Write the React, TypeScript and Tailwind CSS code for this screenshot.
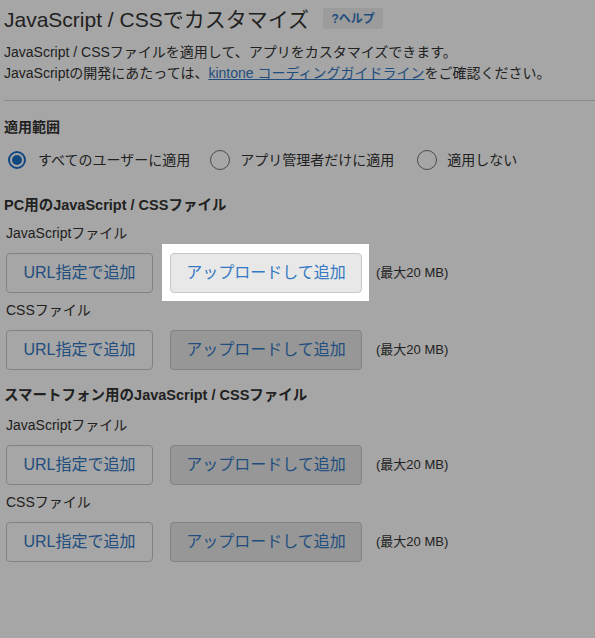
const BTN =
  "flex h-10 items-center justify-center rounded border border-[#c8c8c8] text-base text-[#3479c2]";

function Radio({ label, checked, className = "" }: { label: string; checked?: boolean; className?: string }) {
  return (
    <label className={`flex items-center ${className}`}>
      {checked ? (
        <span className="flex h-[18px] w-[18px] items-center justify-center rounded-full border-2 border-[#1b6fc6]">
          <span className="h-[10px] w-[10px] rounded-full bg-[#1b6fc6]" />
        </span>
      ) : (
        <span className="h-5 w-5 rounded-full border-[1.5px] border-[#767676]" />
      )}
      <span className={checked ? "ml-3" : "ml-[10px]"}>{label}</span>
    </label>
  );
}

function FileRow({ label, spotlight, className = "" }: { label: string; spotlight?: boolean; className?: string }) {
  return (
    <div className={className}>
      <div className="h-5 pl-[2px] leading-5">{label}</div>
      <div className="mt-[10px] flex items-center pl-[2px]">
        <button className={`${BTN} w-[147px] bg-white`}>URL指定で追加</button>
        {spotlight ? (
          // highlighted step: sits above the dimming overlay
          <div className="relative z-20 -mb-2 -mr-[7px] -mt-[9px] ml-[9px] bg-white pb-2 pl-2 pr-[7px] pt-[9px]">
            <button className={`${BTN} w-[192px] bg-[#e8e8e8]`}>アップロードして追加</button>
          </div>
        ) : (
          <button className={`${BTN} ml-[17px] w-[192px] bg-[#e8e8e8]`}>アップロードして追加</button>
        )}
        <span className="ml-[14px] text-[13px]">(最大20 MB)</span>
      </div>
    </div>
  );
}

export default function App() {
  return (
    <div className="min-h-screen bg-white pl-[4px] pt-[6px] font-['Liberation_Sans','Noto_Sans_CJK_JP',sans-serif] text-[14px] text-[#333]">
      <div className="flex h-[28px] items-center">
        <h1 className="text-[21px] font-normal leading-[28px]">JavaScript / CSSでカスタマイズ</h1>
        <span className="ml-[14px] mt-[2px] flex h-[21px] w-[60px] items-center justify-center self-start rounded-[3px] bg-[#f0f0f0] text-[12px] font-bold text-[#3479c2]">
          ?ヘルプ
        </span>
      </div>

      <p className="mt-[8px] leading-[21px]">
        JavaScript / CSSファイルを適用して、アプリをカスタマイズできます。
        <br />
        JavaScriptの開発にあたっては、
        <a className="text-[#3479c2] underline">kintone コーディングガイドライン</a>
        をご確認ください。
      </p>

      <div className="mt-[16px] border-t border-[#d4d4d4]" />

      <div className="mt-[16px] h-5 font-bold leading-5">適用範囲</div>
      <div className="mt-[13px] flex h-5 items-center pl-[4px]">
        <Radio label="すべてのユーザーに適用" checked />
        <Radio label="アプリ管理者だけに適用" className="ml-[20px]" />
        <Radio label="適用しない" className="ml-[23px]" />
      </div>

      <div className="mt-[25px] h-5 text-[14.5px] font-bold leading-5">PC用のJavaScript / CSSファイル</div>
      <FileRow label="JavaScriptファイル" spotlight className="mt-[8px]" />
      <FileRow label="CSSファイル" className="mt-[7px]" />

      <div className="mt-[15px] h-5 text-[14.5px] font-bold leading-5">スマートフォン用のJavaScript / CSSファイル</div>
      <FileRow label="JavaScriptファイル" className="mt-[10px]" />
      <FileRow label="CSSファイル" className="mt-[7px]" />

      <div className="fixed inset-0 z-10 bg-black/35" />
    </div>
  );
}
